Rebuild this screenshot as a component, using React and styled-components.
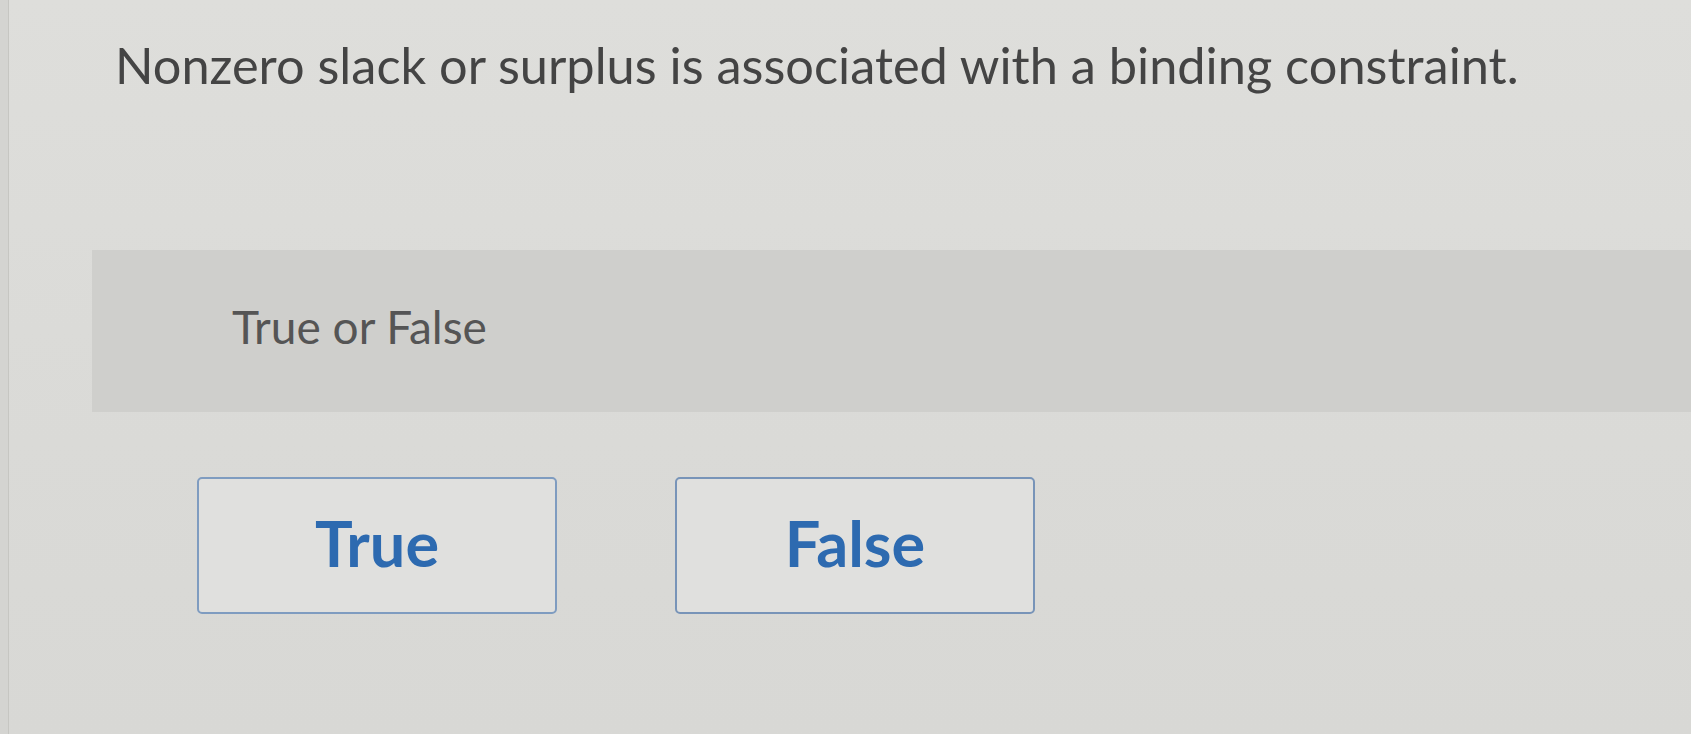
import React from "react";
import styled, { createGlobalStyle } from "styled-components";

const GlobalStyle = createGlobalStyle`
  html, body {
    margin: 0;
    padding: 0;
    background: #d4d4d1;
  }
  #root {
    min-height: 734px;
  }
`;

const Frame = styled.div`
  margin-left: 8px;
  min-height: 734px;
  border-left: 1px solid #c6c6c2;
  background: linear-gradient(180deg, #dededb 0%, #dadad7 60%, #d8d8d5 100%);
  font-family: Lato, "Open Sans", sans-serif;
  overflow: hidden;
`;

const Question = styled.h1`
  margin: 0;
  padding: 34px 0 0 106px;
  font-size: 50.5px;
  font-weight: 400;
  line-height: 62px;
  color: #444444;
`;

const PromptBand = styled.div`
  margin: 154px 0 0 83px;
  height: 162px;
  padding-left: 140px;
  display: flex;
  align-items: center;
  background: #cfcfcc;
`;

const Prompt = styled.span`
  font-size: 46px;
  color: #555555;
  margin-top: -10px;
`;

const Choices = styled.div`
  display: flex;
  gap: 118px;
  padding: 65px 0 0 188px;
`;

const Choice = styled.button`
  width: 360px;
  height: 137px;
  display: flex;
  align-items: center;
  justify-content: center;
  background: #e0e0de;
  border: 2px solid ${(props) => props.$edge};
  border-radius: 5px;
  font-family: Lato, "Open Sans", sans-serif;
  font-size: 63px;
  font-weight: 700;
  color: #2d6ab0;
  cursor: pointer;
  padding: 0 0 6px;
`;

const App = () => {
  const choices = [
    { label: "True", edge: "#7f9cc0" },
    { label: "False", edge: "#7894b8" },
  ];

  return (
    <>
      <GlobalStyle />
      <Frame>
        <Question>
          Nonzero slack or surplus is associated with a binding constraint.
        </Question>
        <PromptBand>
          <Prompt>True or False</Prompt>
        </PromptBand>
        <Choices>
          {choices.map((choice) => (
            <Choice key={choice.label} $edge={choice.edge}>
              {choice.label}
            </Choice>
          ))}
        </Choices>
      </Frame>
    </>
  );
};

export default App;
